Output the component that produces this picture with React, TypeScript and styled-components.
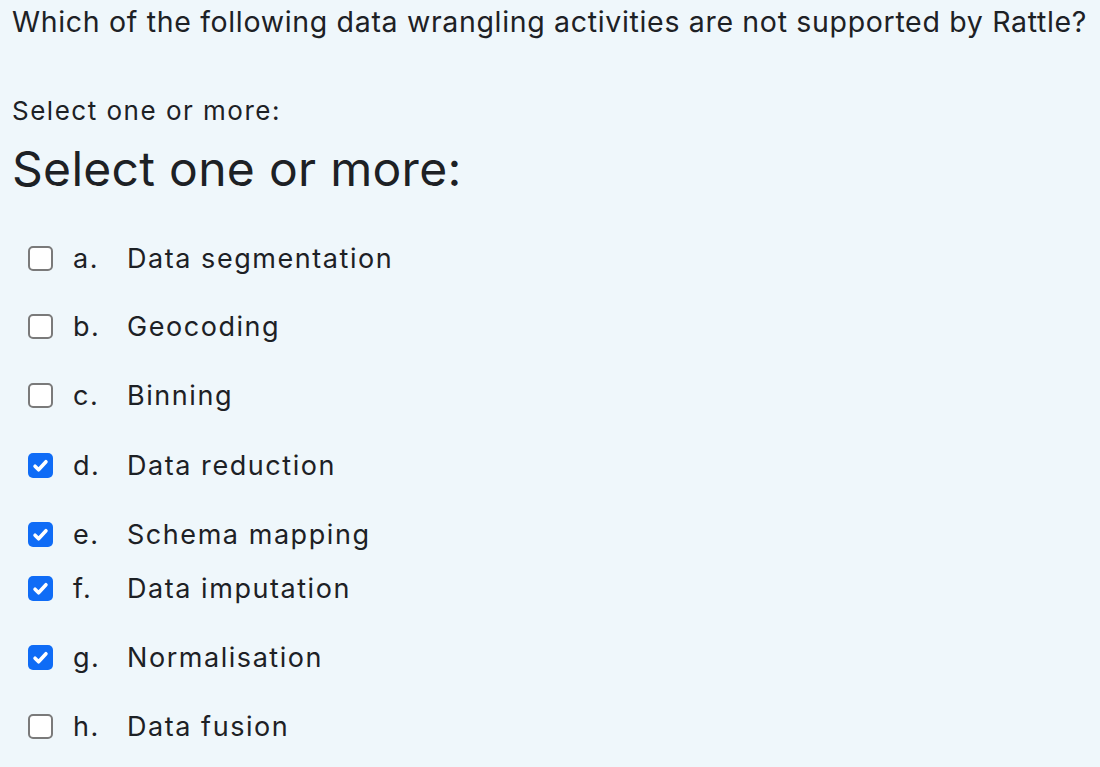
import styled, { createGlobalStyle } from "styled-components";

const GlobalStyle = createGlobalStyle`
  html, body {
    margin: 0;
    padding: 0;
    background: #eff7fb;
  }
  body {
    font-family: "Inter", "Noto Sans", sans-serif;
    color: #1d2125;
  }
`;

const Page = styled.main`
  width: 1100px;
  height: 767px;
  padding: 0 0 0 12px;
  box-sizing: border-box;
  background: #eff7fb;
  overflow: hidden;
`;

const Question = styled.p`
  margin: 0;
  padding-top: 4px;
  font-size: 28.5px;
  letter-spacing: 0.67px;
  line-height: 36px;
  white-space: nowrap;
`;

const Prompt = styled.p`
  margin: 0;
  padding-top: 53px;
  font-size: 26px;
  letter-spacing: 1.5px;
  line-height: 36px;
`;

const Legend = styled.h2`
  margin: 0;
  padding-top: 10px;
  font-size: 48px;
  letter-spacing: 0.3px;
  font-weight: 400;
  line-height: 60px;
`;

const Options = styled.div`
  display: flex;
  flex-direction: column;
  padding: 39px 0 0 16px;
`;

const Row = styled.label<{ $space: number }>`
  display: flex;
  align-items: center;
  height: 40px;
  margin-top: ${(p) => p.$space}px;
  font-size: 27px;
  letter-spacing: 1.55px;
`;

const Box = styled.span<{ $checked: boolean }>`
  display: flex;
  align-items: center;
  justify-content: center;
  width: 25px;
  height: 25px;
  box-sizing: border-box;
  border-radius: 5px;
  border: ${(p) => (p.$checked ? "none" : "2px solid #7a7a7a")};
  background: ${(p) => (p.$checked ? "#0f6cf6" : "#ffffff")};
`;

const Letter = styled.span`
  width: 54px;
  padding-left: 20px;
  box-sizing: content-box;
`;

const Text = styled.span``;

const options = [
  { letter: "a.", text: "Data segmentation", checked: false, space: 0 },
  { letter: "b.", text: "Geocoding", checked: false, space: 28 },
  { letter: "c.", text: "Binning", checked: false, space: 29 },
  { letter: "d.", text: "Data reduction", checked: true, space: 30 },
  { letter: "e.", text: "Schema mapping", checked: true, space: 29 },
  { letter: "f.", text: "Data imputation", checked: true, space: 14 },
  { letter: "g.", text: "Normalisation", checked: true, space: 29 },
  { letter: "h.", text: "Data fusion", checked: false, space: 29 },
];

function Check() {
  return (
    <svg width="19" height="19" viewBox="0 0 16 16">
      <path
        d="M3.4 8.6l3 3L12.6 4.8"
        fill="none"
        stroke="#fff"
        strokeWidth="3"
        strokeLinecap="round"
        strokeLinejoin="round"
      />
    </svg>
  );
}

export default function App() {
  return (
    <>
      <GlobalStyle />
      <Page>
        <Question>
          Which of the following data wrangling activities are not supported by Rattle?
        </Question>
        <Prompt>Select one or more:</Prompt>
        <Legend>Select one or more:</Legend>
        <Options>
          {options.map((o) => (
            <Row key={o.letter} $space={o.space}>
              <Box $checked={o.checked}>{o.checked && <Check />}</Box>
              <Letter>{o.letter}</Letter>
              <Text>{o.text}</Text>
            </Row>
          ))}
        </Options>
      </Page>
    </>
  );
}
